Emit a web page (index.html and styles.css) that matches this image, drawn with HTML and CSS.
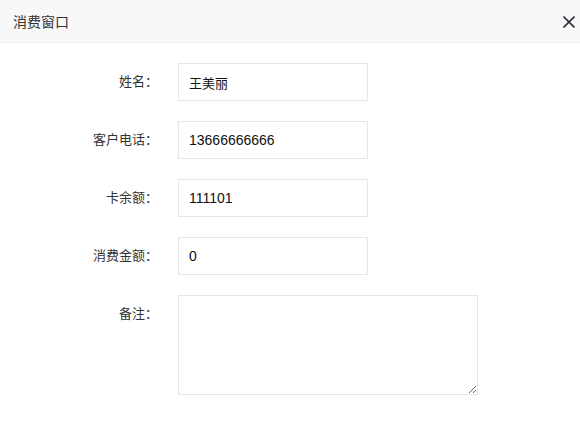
FILE: index.html
```html
<!DOCTYPE html>
<html lang="zh">
<head>
<meta charset="utf-8">
<title>消费窗口</title>
<link rel="stylesheet" href="styles.css">
</head>
<body>
<div class="dialog">
  <div class="header">
    <span class="title">消费窗口</span>
    <span class="close">
      <svg width="12" height="12" viewBox="0 0 12 12"><path d="M0.5 0.5L11.5 11.5M11.5 0.5L0.5 11.5" stroke="#2f2f3a" stroke-width="1.6" fill="none"/></svg>
    </span>
  </div>
  <form class="form">
    <div class="row">
      <label class="label">姓名<span class="colon">：</span></label>
      <input class="input input-cn" type="text" value="王美丽">
    </div>
    <div class="row">
      <label class="label">客户电话<span class="colon">：</span></label>
      <input class="input" type="text" value="13666666666">
    </div>
    <div class="row">
      <label class="label">卡余额<span class="colon">：</span></label>
      <input class="input" type="text" value="111101">
    </div>
    <div class="row">
      <label class="label">消费金额<span class="colon">：</span></label>
      <input class="input" type="text" value="0">
    </div>
    <div class="row">
      <label class="label">备注<span class="colon">：</span></label>
      <textarea class="textarea"></textarea>
    </div>
  </form>
</div>
</body>
</html>
```
FILE: styles.css
```css
html, body {
  margin: 0;
  padding: 0;
  background: #fff;
}
body {
  font-family: "Liberation Sans", "Noto Sans CJK SC", sans-serif;
  font-size: 14px;
  color: #333;
}
.header {
  height: 42px;
  background: #f8f8f8;
  border-bottom: 1px solid #eee;
  display: flex;
  align-items: center;
  justify-content: space-between;
  padding: 0 5px 0 13px;
}
.title {
  font-size: 14px;
  color: #333;
}
.close {
  display: flex;
  width: 12px;
  height: 12px;
  margin-top: 2px;
}
.form {
  padding-top: 20px;
  margin: 0;
}
.row {
  display: flex;
  align-items: flex-start;
  margin-bottom: 20px;
}
.label {
  width: 158px;
  height: 20px;
  text-align: right;
  padding: 9px 0;
  line-height: 20px;
  font-size: 13px;
  color: #333;
  overflow: visible;
}
.colon {
  font-family: "Noto Sans CJK JP", sans-serif;
  line-height: 1;
}
.input, .textarea {
  margin: 0 0 0 20px;
  box-sizing: border-box;
  border: 1px solid #e6e6e6;
  background: #fff;
  font-family: "Liberation Sans", "Noto Sans CJK SC", sans-serif;
  font-size: 14px;
  color: #111;
  outline: none;
}
.input {
  width: 190px;
  height: 38px;
  padding: 0 10px;
}
.input-cn {
  font-size: 13px;
}
.textarea {
  width: 300px;
  height: 100px;
  padding: 6px 10px;
}
```
